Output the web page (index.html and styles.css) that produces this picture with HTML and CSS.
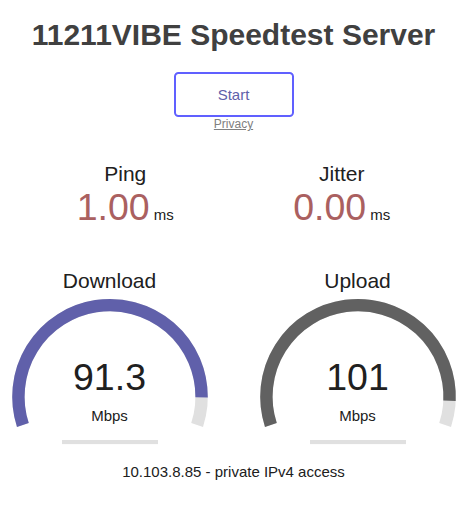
FILE: index.html
```html
<!DOCTYPE html>
<html lang="en">
<head>
    <meta charset="UTF-8">
    <meta name="viewport" content="width=device-width, initial-scale=1.0">
    <title>11211VIBE Speedtest Server</title>
    <link rel="stylesheet" href="styles.css">
</head>
<body>

<div class="page">

    <h1>11211VIBE Speedtest Server</h1>

    <!-- Start knap + privacy -->
    <button class="start-btn" type="button">Start</button>
    <div class="privacy-row"><a class="privacy" href="#">Privacy</a></div>

    <!-- Ping og jitter -->
    <div class="test-group small-group">
        <div class="test-area-small">
            <div class="test-name">Ping</div>
            <div class="reading"><span class="meter-value">1.00</span> <span class="meter-unit">ms</span></div>
        </div>
        <div class="test-area-small">
            <div class="test-name">Jitter</div>
            <div class="reading"><span class="meter-value">0.00</span> <span class="meter-unit">ms</span></div>
        </div>
    </div>

    <!-- Download og upload med måler -->
    <div class="test-group gauge-group">
        <div class="test-area">
            <svg class="meter" viewBox="0 0 240 187.5" aria-hidden="true">
                <path class="meter-bk" d="M 32.88 156.01 A 91.6 91.6 0 1 1 207.12 156.01"/>
                <path class="meter-dl" d="M 32.88 156.01 A 91.6 91.6 0 1 1 211.6 128.34"/>
                <rect class="meter-prog" x="72" y="171" width="96" height="4.1"/>
            </svg>
            <div class="test-name">Download</div>
            <div class="gauge-value">91.3</div>
            <div class="gauge-unit">Mbps</div>
        </div>
        <div class="test-area">
            <svg class="meter" viewBox="0 0 240 187.5" aria-hidden="true">
                <path class="meter-bk" d="M 32.88 156.01 A 91.6 91.6 0 1 1 207.12 156.01"/>
                <path class="meter-ul" d="M 32.88 156.01 A 91.6 91.6 0 1 1 211.51 131.7"/>
                <rect class="meter-prog" x="72" y="171" width="96" height="4.1"/>
            </svg>
            <div class="test-name">Upload</div>
            <div class="gauge-value">101</div>
            <div class="gauge-unit">Mbps</div>
        </div>
    </div>

    <div class="ip-area">10.103.8.85 - private IPv4 access</div>

</div>

</body>
</html>
```

FILE: styles.css
```css
/* Generel styling */
html, body {
    margin: 0;
    padding: 0;
    background-color: #fff;
}

body {
    font-family: "Liberation Sans", Arial, sans-serif;
    font-size: 15px;
    color: #202020;
    text-align: center;
}

.page {
    width: 467px; /* indholdet er centreret lidt til venstre */
    overflow: hidden;
    display: flex;
    flex-direction: column;
    align-items: center;
}

h1 {
    margin: 18px 0 20px;
    font-size: 30px;
    line-height: 34px;
    font-weight: bold;
    color: #404040;
}

/* Start knap */
.start-btn {
    display: block;
    width: 120px;
    height: 45px;
    padding: 0;
    margin: 0;
    border: 2.25px solid #6060FF;
    border-radius: 4.5px;
    background-color: transparent;
    color: #6060AA;
    font-family: inherit;
    font-size: 15px;
    cursor: pointer;
}

.privacy-row {
    font-size: 12px;
    line-height: 14px;
}

.privacy {
    color: #808080;
}

/* Grupper med testområder */
.test-group {
    display: flex;
    justify-content: center;
    width: 100%;
}

.small-group {
    margin-top: 31px;
    gap: 6.5px;
}

.gauge-group {
    margin-top: 2px;
    gap: 8px;
}

.test-name {
    font-size: 21px;
    line-height: 24px;
}

/* Ping / jitter */
.test-area-small {
    flex: 0 0 210px;
    height: 105px;
}

.reading {
    line-height: 43px;
}

.meter-value {
    font-size: 37.5px;
    color: #AA6060;
}

.meter-unit {
    font-size: 15px;
}

/* Download / upload */
.test-area {
    flex: 0 0 240px;
    height: 187.5px;
    position: relative;
    display: flex;
    flex-direction: column;
}

.test-area .test-name,
.gauge-value,
.gauge-unit {
    position: relative; /* ligger over måleren */
}

.meter {
    position: absolute;
    top: 0;
    left: 0;
    width: 240px;
    height: 187.5px;
}

.meter path {
    fill: none;
    stroke-width: 12.4;
}

.meter-bk { stroke: #E0E0E0; }
.meter-dl { stroke: #6060AA; }
.meter-ul { stroke: #616161; }
.meter-prog { fill: #E0E0E0; }

.gauge-value {
    margin-top: 62.5px;
    font-size: 37.5px;
    line-height: 43px;
}

.gauge-unit {
    margin-top: 8px;
    font-size: 15px;
    line-height: 17px;
}

.ip-area {
    margin-top: 6px;
    line-height: 17px;
}
```
